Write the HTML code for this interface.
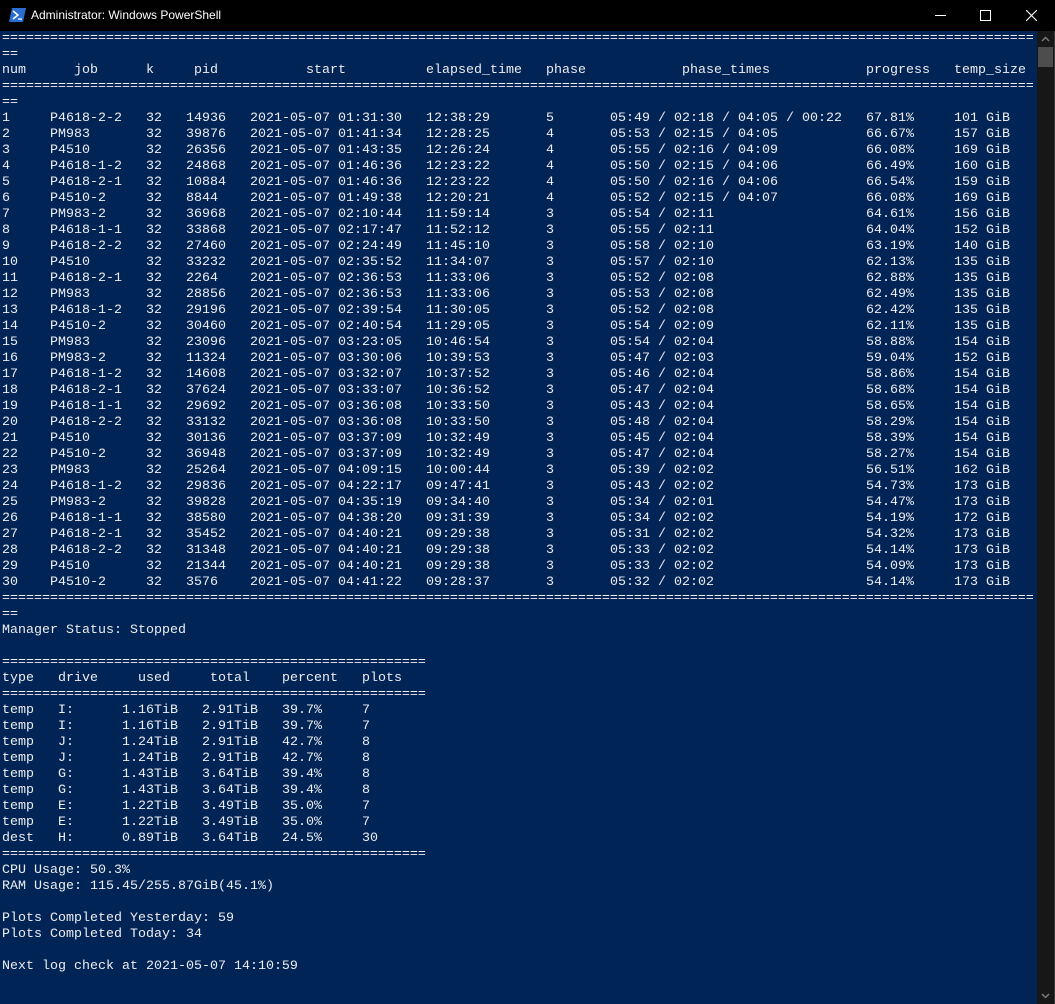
<!DOCTYPE html>
<html><head><meta charset="utf-8"><style>
*{margin:0;padding:0;box-sizing:border-box}
html,body{width:1055px;height:1004px;overflow:hidden;background:#012456}
#tb{position:absolute;left:0;top:0;width:1055px;height:31px;background:#000;color:#fff;font:12px "Liberation Sans",sans-serif}
#tb .t{position:absolute;left:31px;top:8px}
#con{position:absolute;left:2px;top:31px;width:1034px;font-family:"Liberation Mono",monospace;font-size:13.333px;line-height:16px;color:#eeedf0;white-space:normal}
#con div{height:16px;white-space:pre;overflow:hidden}
#con span{display:inline-block;white-space:pre}
.a{width:48px}.b{width:96px}.c{width:40px}.d{width:64px}.e{width:176px}.f{width:120px}.g{width:64px}.h{width:256px}.i{width:88px}
.H1{width:72px}.H2{width:72px}.H3{width:48px}.H4{width:112px}.H5{width:120px}.H6{width:120px}.H7{width:136px}.H8{width:184px}.H9{width:88px}
.s1{width:56px}.s2{width:80px}.s3{width:72px}.s4{width:72px}.s5{width:80px}
.t1{width:56px}.t2{width:64px}.t3{width:80px}.t4{width:80px}.t5{width:80px}
#sb{position:absolute;left:1037px;top:31px;width:17px;height:973px;background:#171717}
#th{position:absolute;left:1038px;top:47px;width:15px;height:20px;background:#4d4d4d}
#bd{position:absolute;left:1054px;top:31px;width:1px;height:973px;background:#3a3a3a}
</style></head><body>
<div id="tb">
<svg style="position:absolute;left:9px;top:8px" width="17" height="14" viewBox="0 0 17 14"><polygon points="3,0 17,0 14,14 0,14" fill="#2a6ed1"/><polyline points="4,3 9,7 4,11" fill="none" stroke="#fff" stroke-width="1.5"/><line x1="9" y1="11" x2="13" y2="11" stroke="#fff" stroke-width="1.3"/></svg>
<span class="t">Administrator: Windows PowerShell</span>
<svg style="position:absolute;left:935px;top:15px" width="11" height="1"><rect width="11" height="1" fill="#fff"/></svg>
<svg style="position:absolute;left:980px;top:10px" width="11" height="11"><rect x=".5" y=".5" width="10" height="10" fill="none" stroke="#fff"/></svg>
<svg style="position:absolute;left:1026px;top:10px" width="11" height="11"><path d="M0 0L11 11M11 0L0 11" stroke="#fff" stroke-width="1.1"/></svg>
</div>
<div id="con"><div>=================================================================================================================================</div><div>==</div><div><span class="H1">num</span><span class="H2">job</span><span class="H3">k</span><span class="H4">pid</span><span class="H5">start</span><span class="H6">elapsed_time</span><span class="H7">phase</span><span class="H8">phase_times</span><span class="H9">progress</span>temp_size</div><div>=================================================================================================================================</div><div>==</div><div><span class="a">1</span><span class="b">P4618-2-2</span><span class="c">32</span><span class="d">14936</span><span class="e">2021-05-07 01:31:30</span><span class="f">12:38:29</span><span class="g">5</span><span class="h">05:49 / 02:18 / 04:05 / 00:22</span><span class="i">67.81%</span>101 GiB</div><div><span class="a">2</span><span class="b">PM983</span><span class="c">32</span><span class="d">39876</span><span class="e">2021-05-07 01:41:34</span><span class="f">12:28:25</span><span class="g">4</span><span class="h">05:53 / 02:15 / 04:05</span><span class="i">66.67%</span>157 GiB</div><div><span class="a">3</span><span class="b">P4510</span><span class="c">32</span><span class="d">26356</span><span class="e">2021-05-07 01:43:35</span><span class="f">12:26:24</span><span class="g">4</span><span class="h">05:55 / 02:16 / 04:09</span><span class="i">66.08%</span>169 GiB</div><div><span class="a">4</span><span class="b">P4618-1-2</span><span class="c">32</span><span class="d">24868</span><span class="e">2021-05-07 01:46:36</span><span class="f">12:23:22</span><span class="g">4</span><span class="h">05:50 / 02:15 / 04:06</span><span class="i">66.49%</span>160 GiB</div><div><span class="a">5</span><span class="b">P4618-2-1</span><span class="c">32</span><span class="d">10884</span><span class="e">2021-05-07 01:46:36</span><span class="f">12:23:22</span><span class="g">4</span><span class="h">05:50 / 02:16 / 04:06</span><span class="i">66.54%</span>159 GiB</div><div><span class="a">6</span><span class="b">P4510-2</span><span class="c">32</span><span class="d">8844</span><span class="e">2021-05-07 01:49:38</span><span class="f">12:20:21</span><span class="g">4</span><span class="h">05:52 / 02:15 / 04:07</span><span class="i">66.08%</span>169 GiB</div><div><span class="a">7</span><span class="b">PM983-2</span><span class="c">32</span><span class="d">36968</span><span class="e">2021-05-07 02:10:44</span><span class="f">11:59:14</span><span class="g">3</span><span class="h">05:54 / 02:11</span><span class="i">64.61%</span>156 GiB</div><div><span class="a">8</span><span class="b">P4618-1-1</span><span class="c">32</span><span class="d">33868</span><span class="e">2021-05-07 02:17:47</span><span class="f">11:52:12</span><span class="g">3</span><span class="h">05:55 / 02:11</span><span class="i">64.04%</span>152 GiB</div><div><span class="a">9</span><span class="b">P4618-2-2</span><span class="c">32</span><span class="d">27460</span><span class="e">2021-05-07 02:24:49</span><span class="f">11:45:10</span><span class="g">3</span><span class="h">05:58 / 02:10</span><span class="i">63.19%</span>140 GiB</div><div><span class="a">10</span><span class="b">P4510</span><span class="c">32</span><span class="d">33232</span><span class="e">2021-05-07 02:35:52</span><span class="f">11:34:07</span><span class="g">3</span><span class="h">05:57 / 02:10</span><span class="i">62.13%</span>135 GiB</div><div><span class="a">11</span><span class="b">P4618-2-1</span><span class="c">32</span><span class="d">2264</span><span class="e">2021-05-07 02:36:53</span><span class="f">11:33:06</span><span class="g">3</span><span class="h">05:52 / 02:08</span><span class="i">62.88%</span>135 GiB</div><div><span class="a">12</span><span class="b">PM983</span><span class="c">32</span><span class="d">28856</span><span class="e">2021-05-07 02:36:53</span><span class="f">11:33:06</span><span class="g">3</span><span class="h">05:53 / 02:08</span><span class="i">62.49%</span>135 GiB</div><div><span class="a">13</span><span class="b">P4618-1-2</span><span class="c">32</span><span class="d">29196</span><span class="e">2021-05-07 02:39:54</span><span class="f">11:30:05</span><span class="g">3</span><span class="h">05:52 / 02:08</span><span class="i">62.42%</span>135 GiB</div><div><span class="a">14</span><span class="b">P4510-2</span><span class="c">32</span><span class="d">30460</span><span class="e">2021-05-07 02:40:54</span><span class="f">11:29:05</span><span class="g">3</span><span class="h">05:54 / 02:09</span><span class="i">62.11%</span>135 GiB</div><div><span class="a">15</span><span class="b">PM983</span><span class="c">32</span><span class="d">23096</span><span class="e">2021-05-07 03:23:05</span><span class="f">10:46:54</span><span class="g">3</span><span class="h">05:54 / 02:04</span><span class="i">58.88%</span>154 GiB</div><div><span class="a">16</span><span class="b">PM983-2</span><span class="c">32</span><span class="d">11324</span><span class="e">2021-05-07 03:30:06</span><span class="f">10:39:53</span><span class="g">3</span><span class="h">05:47 / 02:03</span><span class="i">59.04%</span>152 GiB</div><div><span class="a">17</span><span class="b">P4618-1-2</span><span class="c">32</span><span class="d">14608</span><span class="e">2021-05-07 03:32:07</span><span class="f">10:37:52</span><span class="g">3</span><span class="h">05:46 / 02:04</span><span class="i">58.86%</span>154 GiB</div><div><span class="a">18</span><span class="b">P4618-2-1</span><span class="c">32</span><span class="d">37624</span><span class="e">2021-05-07 03:33:07</span><span class="f">10:36:52</span><span class="g">3</span><span class="h">05:47 / 02:04</span><span class="i">58.68%</span>154 GiB</div><div><span class="a">19</span><span class="b">P4618-1-1</span><span class="c">32</span><span class="d">29692</span><span class="e">2021-05-07 03:36:08</span><span class="f">10:33:50</span><span class="g">3</span><span class="h">05:43 / 02:04</span><span class="i">58.65%</span>154 GiB</div><div><span class="a">20</span><span class="b">P4618-2-2</span><span class="c">32</span><span class="d">33132</span><span class="e">2021-05-07 03:36:08</span><span class="f">10:33:50</span><span class="g">3</span><span class="h">05:48 / 02:04</span><span class="i">58.29%</span>154 GiB</div><div><span class="a">21</span><span class="b">P4510</span><span class="c">32</span><span class="d">30136</span><span class="e">2021-05-07 03:37:09</span><span class="f">10:32:49</span><span class="g">3</span><span class="h">05:45 / 02:04</span><span class="i">58.39%</span>154 GiB</div><div><span class="a">22</span><span class="b">P4510-2</span><span class="c">32</span><span class="d">36948</span><span class="e">2021-05-07 03:37:09</span><span class="f">10:32:49</span><span class="g">3</span><span class="h">05:47 / 02:04</span><span class="i">58.27%</span>154 GiB</div><div><span class="a">23</span><span class="b">PM983</span><span class="c">32</span><span class="d">25264</span><span class="e">2021-05-07 04:09:15</span><span class="f">10:00:44</span><span class="g">3</span><span class="h">05:39 / 02:02</span><span class="i">56.51%</span>162 GiB</div><div><span class="a">24</span><span class="b">P4618-1-2</span><span class="c">32</span><span class="d">29836</span><span class="e">2021-05-07 04:22:17</span><span class="f">09:47:41</span><span class="g">3</span><span class="h">05:43 / 02:02</span><span class="i">54.73%</span>173 GiB</div><div><span class="a">25</span><span class="b">PM983-2</span><span class="c">32</span><span class="d">39828</span><span class="e">2021-05-07 04:35:19</span><span class="f">09:34:40</span><span class="g">3</span><span class="h">05:34 / 02:01</span><span class="i">54.47%</span>173 GiB</div><div><span class="a">26</span><span class="b">P4618-1-1</span><span class="c">32</span><span class="d">38580</span><span class="e">2021-05-07 04:38:20</span><span class="f">09:31:39</span><span class="g">3</span><span class="h">05:34 / 02:02</span><span class="i">54.19%</span>172 GiB</div><div><span class="a">27</span><span class="b">P4618-2-1</span><span class="c">32</span><span class="d">35452</span><span class="e">2021-05-07 04:40:21</span><span class="f">09:29:38</span><span class="g">3</span><span class="h">05:31 / 02:02</span><span class="i">54.32%</span>173 GiB</div><div><span class="a">28</span><span class="b">P4618-2-2</span><span class="c">32</span><span class="d">31348</span><span class="e">2021-05-07 04:40:21</span><span class="f">09:29:38</span><span class="g">3</span><span class="h">05:33 / 02:02</span><span class="i">54.14%</span>173 GiB</div><div><span class="a">29</span><span class="b">P4510</span><span class="c">32</span><span class="d">21344</span><span class="e">2021-05-07 04:40:21</span><span class="f">09:29:38</span><span class="g">3</span><span class="h">05:33 / 02:02</span><span class="i">54.09%</span>173 GiB</div><div><span class="a">30</span><span class="b">P4510-2</span><span class="c">32</span><span class="d">3576</span><span class="e">2021-05-07 04:41:22</span><span class="f">09:28:37</span><span class="g">3</span><span class="h">05:32 / 02:02</span><span class="i">54.14%</span>173 GiB</div><div>=================================================================================================================================</div><div>==</div><div>Manager Status: Stopped</div><div></div><div>=====================================================</div><div><span class="s1">type</span><span class="s2">drive</span><span class="s3">used</span><span class="s4">total</span><span class="s5">percent</span>plots</div><div>=====================================================</div><div><span class="t1">temp</span><span class="t2">I:</span><span class="t3">1.16TiB</span><span class="t4">2.91TiB</span><span class="t5">39.7%</span>7</div><div><span class="t1">temp</span><span class="t2">I:</span><span class="t3">1.16TiB</span><span class="t4">2.91TiB</span><span class="t5">39.7%</span>7</div><div><span class="t1">temp</span><span class="t2">J:</span><span class="t3">1.24TiB</span><span class="t4">2.91TiB</span><span class="t5">42.7%</span>8</div><div><span class="t1">temp</span><span class="t2">J:</span><span class="t3">1.24TiB</span><span class="t4">2.91TiB</span><span class="t5">42.7%</span>8</div><div><span class="t1">temp</span><span class="t2">G:</span><span class="t3">1.43TiB</span><span class="t4">3.64TiB</span><span class="t5">39.4%</span>8</div><div><span class="t1">temp</span><span class="t2">G:</span><span class="t3">1.43TiB</span><span class="t4">3.64TiB</span><span class="t5">39.4%</span>8</div><div><span class="t1">temp</span><span class="t2">E:</span><span class="t3">1.22TiB</span><span class="t4">3.49TiB</span><span class="t5">35.0%</span>7</div><div><span class="t1">temp</span><span class="t2">E:</span><span class="t3">1.22TiB</span><span class="t4">3.49TiB</span><span class="t5">35.0%</span>7</div><div><span class="t1">dest</span><span class="t2">H:</span><span class="t3">0.89TiB</span><span class="t4">3.64TiB</span><span class="t5">24.5%</span>30</div><div>=====================================================</div><div>CPU Usage: 50.3%</div><div>RAM Usage: 115.45/255.87GiB(45.1%)</div><div></div><div>Plots Completed Yesterday: 59</div><div>Plots Completed Today: 34</div><div></div><div>Next log check at 2021-05-07 14:10:59</div></div>
<div id="sb"></div>
<div id="th"></div>
<div id="bd"></div>
<svg style="position:absolute;left:1041px;top:36px" width="9" height="6"><polyline points="1,5 4.5,1.5 8,5" fill="none" stroke="#7a7a7a" stroke-width="1.5"/></svg>
<svg style="position:absolute;left:1041px;top:993px" width="9" height="6"><polyline points="1,1 4.5,4.5 8,1" fill="none" stroke="#7a7a7a" stroke-width="1.5"/></svg>
</body></html>
